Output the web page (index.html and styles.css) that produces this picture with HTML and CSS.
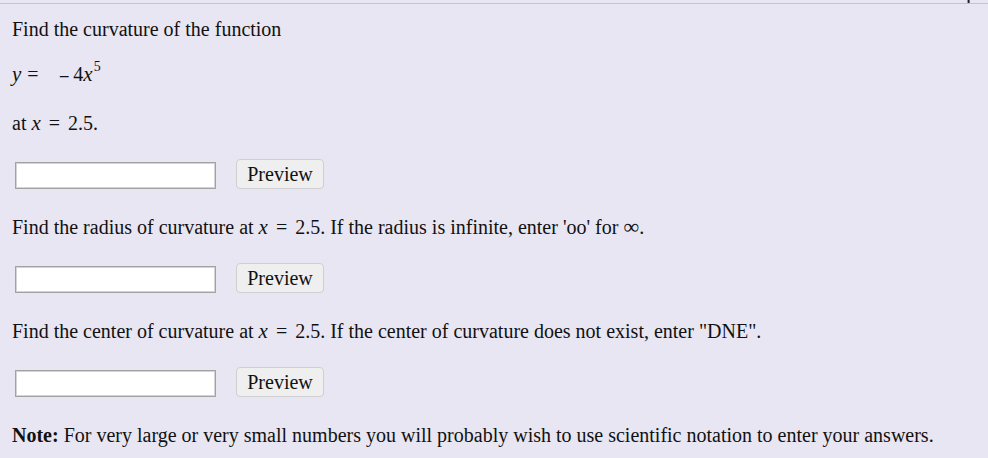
FILE: index.html
```html
<!DOCTYPE html>
<html>
<head>
<meta charset="utf-8">
<link rel="stylesheet" href="styles.css">
</head>
<body>
<div class="tick"><span class="t1"></span><span class="t2"></span><span class="t3"></span></div>
<div class="page">
  <p class="line first">Find the curvature of the function</p>
  <p class="line math-line"><span class="mi">y</span><span class="mo eq">=</span><span class="mo neg">−</span><span class="mn">4</span><span class="mi">x</span><sup class="sup">5</sup></p>
  <p class="line at-line">at <span class="mi">x</span><span class="mo eq2">=</span><span class="mn">2.5</span>.</p>
  <div class="answer-row">
    <input class="answer" type="text">
    <button class="preview">Preview</button>
  </div>
  <p class="line q">Find the radius of curvature at <span class="mi">x</span><span class="mo eq2">=</span><span class="mn">2.5</span>. If the radius is infinite, enter 'oo' for <span class="inf">∞</span>.</p>
  <div class="answer-row">
    <input class="answer" type="text">
    <button class="preview">Preview</button>
  </div>
  <p class="line q">Find the center of curvature at <span class="mi">x</span><span class="mo eq2">=</span><span class="mn">2.5</span>. If the center of curvature does not exist, enter "DNE".</p>
  <div class="answer-row">
    <input class="answer" type="text">
    <button class="preview">Preview</button>
  </div>
  <p class="line q"><b>Note:</b> For very large or very small numbers you will probably wish to use scientific notation to enter your answers.</p>
</div>
</body>
</html>
```
FILE: styles.css
```css
html, body {
  margin: 0;
  padding: 0;
  background: #e8e6f2;
}
body {
  padding-top: 3px;
  font-family: "Liberation Serif", "Times New Roman", serif;
  font-size: 20px;
  color: #111;
  height: 455px;
  overflow: hidden;
}
.tick {
  position: absolute;
  left: 967px;
  top: 0;
  height: 3px;
  display: flex;
}
.tick span { width: 1px; height: 3px; display: block; }
.t1 { background: #e08a10; }
.t2 { background: #202020; }
.t3 { background: #3b78d8; }
.page {
  border-top: 1px solid #c4c1d8;
  padding: 0 12px;
  display: flex;
  flex-direction: column;
}
.line {
  margin: 0;
  line-height: 22px;
  height: 22px;
  white-space: nowrap;
}
.first { margin-top: 14px; }
.math-line { margin-top: 23px; }
.at-line { margin-top: 27px; }
.q { margin-top: 27px; }
.mi { font-style: italic; font-size: 21px; }
.mn { font-size: 20px; }
.mo { display: inline-block; font-size: 20px; }
.eq { margin: 0 0 0 6px; }
.neg {
  font-family: "DejaVu Sans", sans-serif;
  font-size: 14px;
  margin: 0 3px 0 20px;
}
.eq2 { margin: 0 8px 0 8px; }
.sup { font-size: 14px; vertical-align: 10px; line-height: 0; margin-left: 1px; }
.inf { font-size: 22px; }
.answer-row {
  display: flex;
  align-items: center;
  gap: 20px;
  margin-top: 25px;
  height: 30px;
  padding-left: 3px;
}
.answer {
  box-sizing: border-box;
  width: 201px;
  height: 27px;
  margin: 3px 0 0 0;
  border: 1px solid #a2a2a2;
  box-shadow: inset 0 0 0 1px #d4d4d4;
  background: #fff;
  padding: 0;
}
.preview {
  box-sizing: border-box;
  width: 88px;
  height: 30px;
  font-family: "Liberation Serif", "Times New Roman", serif;
  font-size: 20px;
  color: #111;
  background: #efefef;
  border: 1px solid #cfcfcf;
  border-radius: 4px;
  padding: 0;
}
```
